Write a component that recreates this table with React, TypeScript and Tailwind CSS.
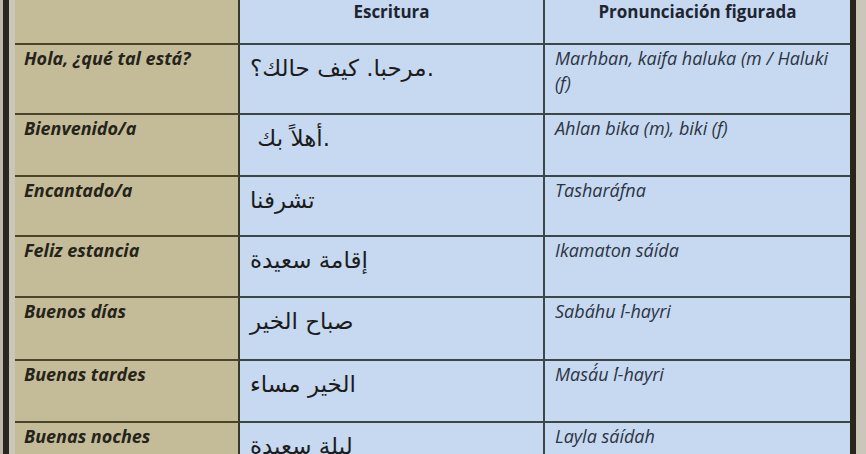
const rows = [
  { es: 'Hola, ¿qué tal está?', ar: '.مرحبا. كيف حالك؟', pr: 'Marhban, kaifa haluka (m / Haluki (f)', h: 'h-[70px]' },
  { es: 'Bienvenido/a', ar: '.أهلاً بك ', pr: 'Ahlan bika (m), biki (f)', h: 'h-[62px]' },
  { es: 'Encantado/a', ar: 'تشرفنا', pr: 'Tasharáfna', h: 'h-[60px]' },
  { es: 'Feliz estancia', ar: 'إقامة سعيدة', pr: 'Ikamaton sa´ída', h: 'h-[61px]' },
  { es: 'Buenos días', ar: 'صباح الخير', pr: 'Sabáhu ´l-hayri', h: 'h-[63px]' },
  { es: 'Buenas tardes', ar: 'الخير مساء', pr: 'Masá´u  ´l-hayri', h: 'h-[62px]' },
  { es: 'Buenas noches', ar: 'ليلة سعيدة', pr: 'Layla sa´ídah', h: 'h-[62px]' },
]

const sans = "font-['Open_Sans',sans-serif]"

export default function App() {
  return (
    <div className="flex h-[454px] w-[866px] overflow-hidden bg-[#cac6ba]">
      <div className="w-[3px] shrink-0 bg-[#bdb8aa]" />
      <div className="w-[6px] shrink-0 bg-[#29271d]" />
      <div className="w-[6px] shrink-0 bg-[#cac6ba]" />
      <div className="w-[835px] shrink-0">
        {/* header */}
        <div className="flex h-[45px]">
          <div className="w-[225px] shrink-0 border-b-2 border-r-2 border-b-[#4a4428] border-r-[#3a3826] bg-[#c4bc98]" />
          <div className={`w-[305px] shrink-0 border-b-2 border-r-2 border-[#3c4747] bg-[#c6d9f0] pt-[1px] text-center text-[17px] font-bold leading-[21px] text-[#1f2530] ${sans}`}>
            Escritura
          </div>
          <div className={`flex-1 border-b-2 border-[#3c4747] bg-[#c6d9f0] pt-[1px] text-center text-[17px] font-bold leading-[21px] text-[#1f2530] ${sans}`}>
            Pronunciación figurada
          </div>
        </div>
        {rows.map((r) => (
          <div key={r.es} className={`flex ${r.h} box-content`}>
            <div className={`w-[225px] shrink-0 border-b-2 border-r-2 border-b-[#4a4428] border-r-[#3a3826] bg-[#c4bc98] pl-[9px] pt-[1px] text-[18px] font-bold italic leading-[24px] text-[#26241a] ${sans}`}>
              {r.es}
            </div>
            <div className="w-[305px] shrink-0 border-b-2 border-r-2 border-[#3c4747] bg-[#c6d9f0] pl-[10px] pt-[8px]">
              <span dir="rtl" className="inline-block whitespace-pre font-['DejaVu_Sans',sans-serif] text-[23px] leading-[30px] text-[#1c1c1c]">
                {r.ar}
              </span>
            </div>
            <div className={`flex-1 border-b-2 border-[#3c4747] bg-[#c6d9f0] pl-[10px] pr-[6px] pt-[1px] text-[18px] italic leading-[25px] text-[#2c3442] ${sans}`}>
              {r.pr}
            </div>
          </div>
        ))}
      </div>
      <div className="w-[6px] shrink-0 bg-[#29271d]" />
      <div className="flex-1 bg-[#cac6ba]" />
    </div>
  )
}
